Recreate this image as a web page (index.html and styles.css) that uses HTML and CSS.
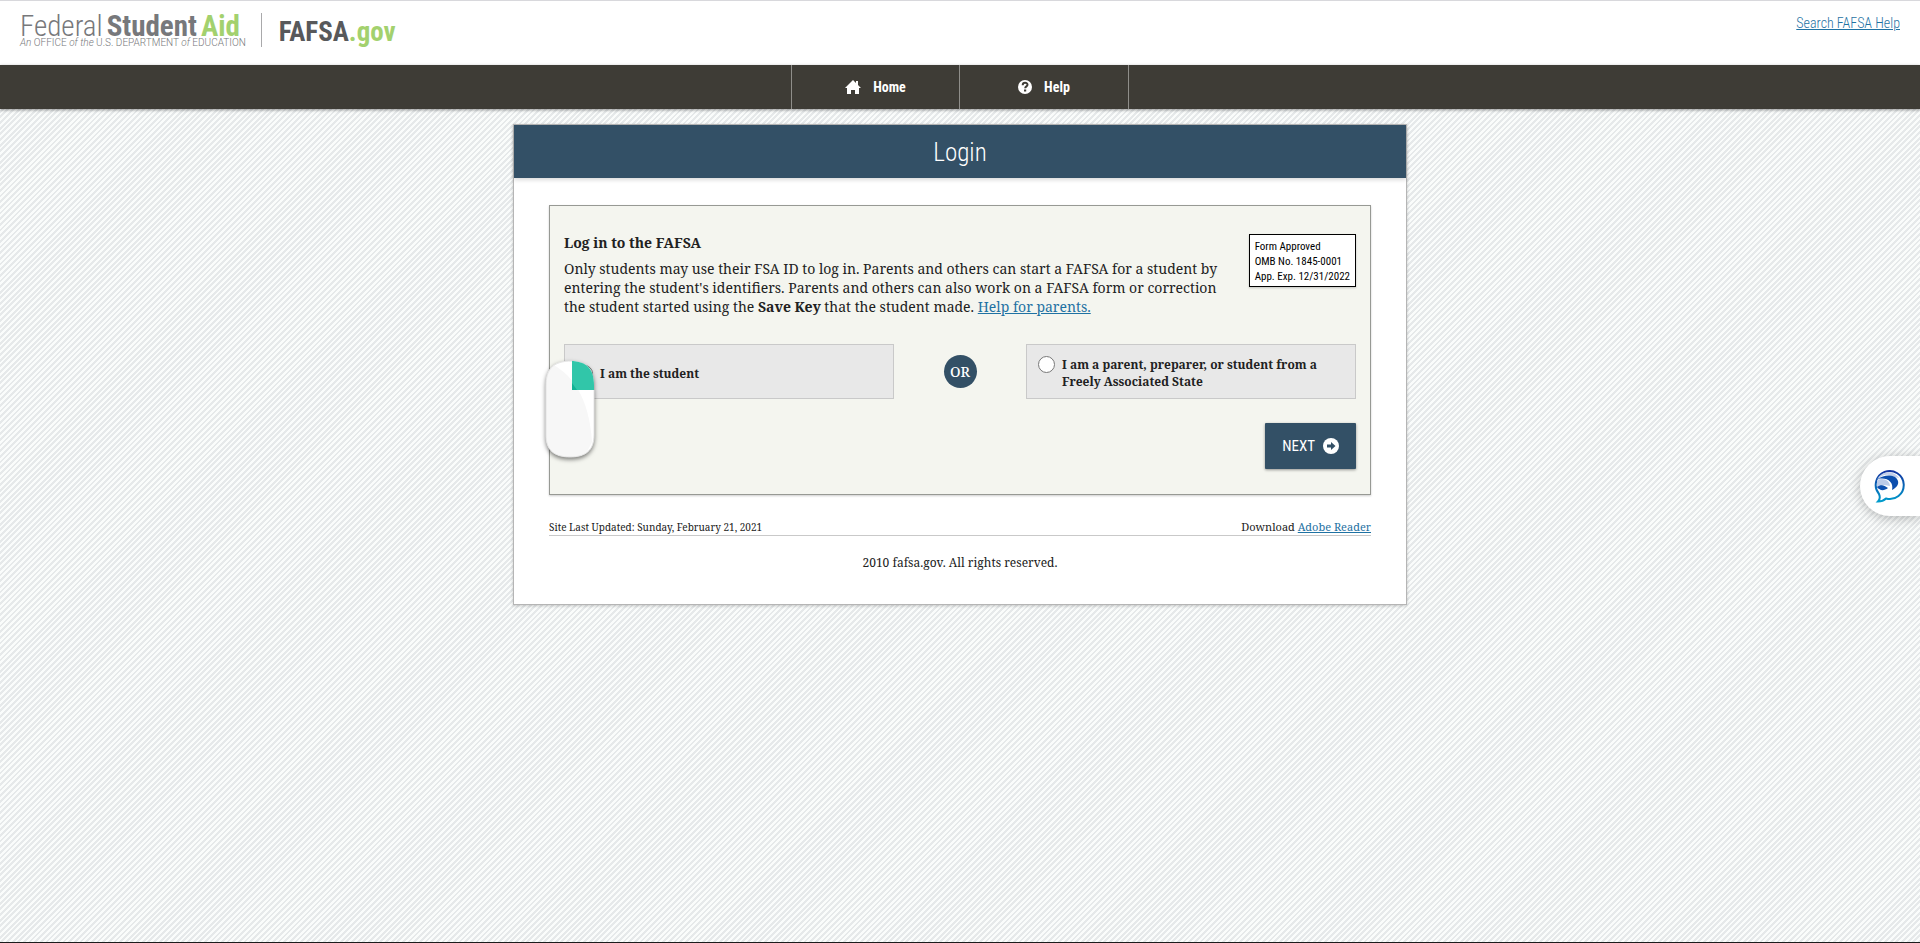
FILE: index.html
```
<!DOCTYPE html>
<html lang="en">
<head>
  <meta charset="UTF-8">
  <meta name="viewport" content="width=device-width, initial-scale=1.0">
  <title>FAFSA Login</title>
  <link rel="stylesheet" href="styles.css">
</head>
<body>
  <!-- Header -->
  <header class="header">
    <div class="logos">
      <div class="fsa">
        <div class="fsaName"><span class="light">Federal</span><b>Student</b><b class="green">Aid</b></div>
        <div class="fsaTag"><i>An</i> OFFICE <i>of the</i> U.S. DEPARTMENT <i>of</i> EDUCATION</div>
      </div>
      <div class="fafsa">FAFSA<span class="green">.gov</span></div>
    </div>
    <a class="search" href="#">Search FAFSA Help</a>
  </header>

  <!-- Navigation -->
  <nav class="nav">
    <a href="#">
      <svg width="16" height="14" viewBox="0 0 16 14"><path fill="#fff" d="M8 0 0 8h2v6h4v-4h4v4h4V8h2l-3-3V1h-2v2z"/></svg>
      Home
    </a>
    <a href="#">
      <svg width="14" height="14" viewBox="0 0 14 14"><circle cx="7" cy="7" r="7" fill="#fff"/><path d="M4.700 5.200c0-3.300 4.800-3 4.800-.4 0 1.700-2.300 1.500-2.300 3.500" fill="none" stroke="#3e3c36" stroke-width="2"/><path d="M6 9.500h2.200v2H6z" fill="#3e3c36"/></svg>
      Help
    </a>
  </nav>

  <!-- Login card -->
  <main class="card">
    <h1>Login</h1>
    <div class="content">
      <form class="panel">
        <div class="intro">
          <div>
            <h2>Log in to the FAFSA</h2>
            <p>Only students may use their FSA ID to log in. Parents and others can start a FAFSA for a student by entering the student's identifiers. Parents and others can also work on a FAFSA form or correction the student started using the <b>Save Key</b> that the student made. <a href="#">Help for parents.</a></p>
          </div>
          <div class="omb">Form Approved<br>OMB No. 1845-0001<br>App. Exp. 12/31/2022</div>
        </div>
        <div class="choices">
          <div class="choice single">
            <input type="radio" name="who" id="student">
            <label for="student">I am the student</label>
            <svg class="mouse" width="54" height="108" viewBox="0 0 54 108">
              <defs>
                <clipPath id="shape"><path d="M27 3C45 3 51 12 51 28v49c0 16-9 22-24 22S3 93 3 77V28C3 12 9 3 27 3z"/></clipPath>
              </defs>
              <g clip-path="url(#shape)">
                <path fill="#fff" d="M0 0h54v102H0z"/>
                <path fill="#f7f7f7" d="M0 2C28 12 46 38 49 84L40 102H0z"/>
                <path fill="#31c6a9" d="M29 0h25v32H29z"/>
                <path fill="#12b295" d="M29 25l5 7h-5z"/>
              </g>
              <path fill="none" stroke="#e4e4e4" d="M29 3C9 3 3 12 3 28v49c0 16 9 22 24 22s24-6 24-22V32"/>
            </svg>
          </div>
          <div class="or">OR</div>
          <div class="choice">
            <input type="radio" name="who" id="parent">
            <label for="parent">I am a parent, preparer, or student from a Freely Associated State</label>
          </div>
        </div>
        <div class="actions">
          <button type="button" class="next">NEXT
            <svg width="16" height="16" viewBox="0 0 16 16"><circle cx="8" cy="8" r="8" fill="#fff"/><path fill="#335066" d="M4 6.500h4V4l4.500 4L8 12V9.500H4z"/></svg>
          </button>
        </div>
      </form>
      <footer>
        <div class="info">
          <span class="updated">Site Last Updated: Sunday, February 21, 2021</span>
          <span>Download <a href="#">Adobe Reader</a></span>
        </div>
        <p class="rights">2010 fafsa.gov. All rights reserved.</p>
      </footer>
    </div>
  </main>

  <!-- Chat tab -->
  <button type="button" class="chat" aria-label="Chat">
    <svg width="32" height="34" viewBox="0 0 32 34">
      <defs><linearGradient id="ring" x1="0" y1="0" x2="0" y2="1"><stop offset="0" stop-color="#1233a0"/><stop offset="1" stop-color="#009ccc"/></linearGradient></defs>
      <path fill="#fff" stroke="url(#ring)" stroke-width="2" d="M6 25A14 14 0 1 1 13 29.500C11 31.500 8 32.500 5 32.500c2-2 2.500-4 1-7.500z"/>
      <path fill="#c3cfea" d="M4 11C8 1 21 1 26 9l-5-1C15 4 8 6 4 11z"/>
      <path fill="#0d4fae" d="M5 10c6-5 18-5 20 2 1 4-2 7-6 9 2-8-5-13-14-11z"/>
      <path fill="#bccbe8" d="M4 11c7-3 13 1 13 6l-6-1-7 3z"/>
      <path fill="#0d4fae" d="M4 18c4-3 7-2 11 1-4 3-8 3-11-1z"/>
    </svg>
  </button>
</body>
</html>
```
FILE: styles.css
```
/* Page */
* {
  box-sizing: border-box;
}
body {
  margin: 0;
  min-height: 100vh;
  border-top: 1px solid #d8d8dc;
  border-bottom: 1px solid #1c1c1c;
  font-family: "Noto Serif", "DejaVu Serif", serif;
  font-size: 14px;
  color: #212121;
  background: repeating-linear-gradient(135deg, #fafcfb 0, #fafcfb 2px, #e6e9ea 2px, #e6e9ea 4px);
}
a {
  color: #1f72a3;
}
.green {
  color: #a3d16e;
}
.light {
  font-weight: 300;
}
/* Header */
.header {
  display: flex;
  justify-content: space-between;
  height: 64px;
  padding: 12px 20px;
  background: #fff;
  font-family: "Roboto Condensed", Lato, sans-serif;
}
.logos {
  display: flex;
  align-items: flex-start;
}
.fsa {
  padding-right: 15px;
  margin-right: 17px;
  border-right: 1px solid #a9a9ab;
  color: #77787b;
}
.fsaName {
  display: flex;
  gap: 4px;
  font-size: 29px;
  line-height: 26px;
}
.fsaTag {
  font-family: Roboto, sans-serif;
  font-size: 10px;
  font-weight: 300;
  line-height: 8px;
}
.fafsa {
  font-size: 27px;
  line-height: 38px;
  font-weight: bold;
  color: #58595b;
}
.search {
  font-size: 14px;
  font-weight: 300;
  line-height: 20px;
}
/* Navigation */
.nav {
  display: flex;
  justify-content: center;
  height: 44px;
  background: #3e3c36;
  box-shadow: 0 1px 3px rgba(0, 0, 0, 0.4);
}
.nav a {
  display: flex;
  align-items: center;
  justify-content: center;
  gap: 12px;
  width: 169px;
  border-right: 1px solid #8f8e8a;
  color: #fff;
  font-family: "Roboto Condensed", Lato, sans-serif;
  font-size: 14px;
  font-weight: bold;
  text-decoration: none;
}
.nav a:first-child {
  border-left: 1px solid #8f8e8a;
}
/* Login card */
.card {
  max-width: 894px;
  margin: 15px auto 0;
  border: 1px solid #b5b5b5;
  background: #fff;
  box-shadow: 0 1px 3px rgba(0, 0, 0, 0.2);
}
h1 {
  margin: 0;
  padding-top: 3px;
  background: #335066;
  box-shadow: 0 2px 4px rgba(0, 0, 0, 0.15);
  color: #fff;
  font-family: "Roboto Condensed", Lato, sans-serif;
  font-size: 25px;
  font-weight: 300;
  line-height: 50px;
  text-align: center;
}
.content {
  padding: 27px 35px 32px;
}
.panel {
  padding: 27px 14px 25px;
  border: 1px solid #979994;
  background: #f4f5ef;
  box-shadow: 0 1px 2px rgba(0, 0, 0, 0.2);
}
.intro {
  display: flex;
  justify-content: space-between;
  align-items: flex-start;
  gap: 24px;
}
h2 {
  margin: 0 0 6px;
  font-size: 14px;
  line-height: 20px;
}
p {
  margin: 0;
  line-height: 19px;
}
.omb {
  flex: none;
  margin-top: 1px;
  padding: 4px 5px 2px;
  border: 1px solid #000;
  background: #fff;
  box-shadow: 0 1px 2px rgba(0, 0, 0, 0.2);
  color: #000;
  font-family: "Roboto Condensed", Lato, sans-serif;
  font-size: 11px;
  line-height: 15px;
}
/* Student or parent */
.choices {
  display: grid;
  grid-template-columns: 5fr 2fr 5fr;
  align-items: center;
  margin-top: 28px;
}
.choice {
  position: relative;
  display: flex;
  align-items: flex-start;
  gap: 7px;
  height: 55px;
  padding: 11px;
  border: 1px solid #c9c9c9;
  background: #e8e8e8;
  font-size: 12px;
  font-weight: bold;
  line-height: 17px;
}
.single {
  padding-top: 14px;
  align-items: center;
}
.choice input {
  flex: none;
  width: 17px;
  height: 17px;
  margin: 0;
}
.mouse {
  position: absolute;
  left: -22px;
  top: 13px;
  filter: drop-shadow(0 2px 2px rgba(0, 0, 0, 0.5));
}
.or {
  justify-self: center;
  width: 33px;
  border-radius: 50%;
  background: #335066;
  color: #fff;
  font-weight: 500;
  line-height: 33px;
  text-align: center;
}
.actions {
  display: flex;
  justify-content: flex-end;
  margin-top: 24px;
}
.next {
  display: flex;
  align-items: center;
  gap: 8px;
  height: 46px;
  padding: 0 17px;
  border: 0;
  border-radius: 1px;
  background: #335066;
  box-shadow: 0 1px 3px rgba(0, 0, 0, 0.4);
  color: #fff;
  font-family: "Roboto Condensed", Lato, sans-serif;
  font-size: 15px;
}
/* Footer */
.info {
  display: flex;
  justify-content: space-between;
  align-items: flex-end;
  margin-top: 24px;
  border-bottom: 1px solid #c9c9c9;
  font-size: 11px;
  line-height: 16px;
}
.updated {
  font-size: 10px;
}
.rights {
  margin-top: 17px;
  font-size: 12px;
  text-align: center;
}
/* Chat tab */
.chat {
  position: fixed;
  right: 0;
  top: 456px;
  display: flex;
  align-items: center;
  width: 60px;
  height: 60px;
  padding: 0 13px;
  border: 0;
  border-radius: 30px 0 0 30px;
  background: #fff;
  box-shadow: 0 2px 12px rgba(0, 0, 0, 0.25);
}
```
